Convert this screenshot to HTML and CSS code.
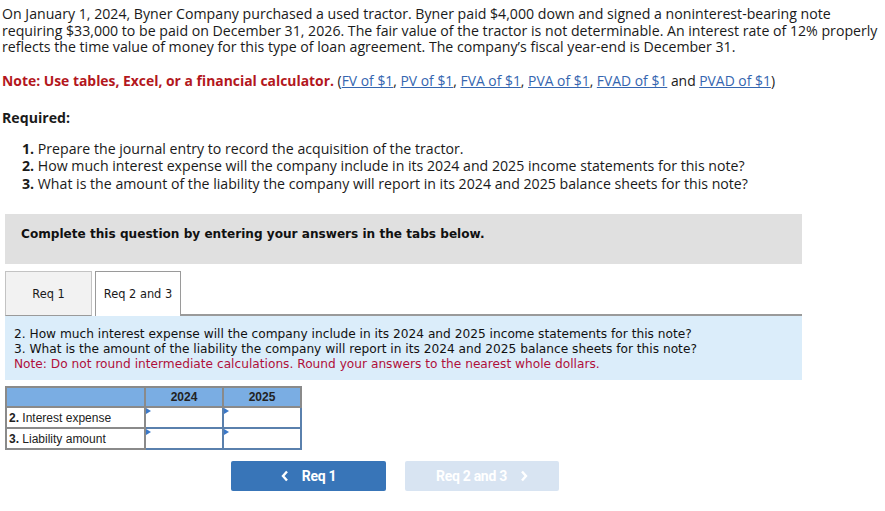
FILE: index.html
```html
<!DOCTYPE html>
<html>
<head>
<meta charset="utf-8">
<link rel="stylesheet" href="styles.css">
</head>
<body>
<div class="page">
  <p class="intro">On January 1, 2024, Byner Company purchased a used tractor. Byner paid $4,000 down and signed a noninterest-bearing note requiring $33,000 to be paid on December 31, 2026. The fair value of the tractor is not determinable. An interest rate of 12% properly reflects the time value of money for this type of loan agreement. The company’s fiscal year-end is December 31.</p>
  <p class="note"><b class="red">Note: Use tables, Excel, or a financial calculator.</b> (<a href="#">FV of $1</a>, <a href="#">PV of $1</a>, <a href="#">FVA of $1</a>, <a href="#">PVA of $1</a>, <a href="#">FVAD of $1</a> and <a href="#">PVAD of $1</a>)</p>
  <p class="req">Required:</p>
  <ol class="reqlist">
    <li><b>1.</b> Prepare the journal entry to record the acquisition of the tractor.</li>
    <li><b>2.</b> How much interest expense will the company include in its 2024 and 2025 income statements for this note?</li>
    <li><b>3.</b> What is the amount of the liability the company will report in its 2024 and 2025 balance sheets for this note?</li>
  </ol>
  <div class="panel">
    <div class="banner">Complete this question by entering your answers in the tabs below.</div>
    <div class="tabs">
      <div class="tab">Req 1</div>
      <div class="tab active">Req 2 and 3</div>
      <div class="tabline"></div>
    </div>
    <div class="question">
      <div>2. How much interest expense will the company include in its 2024 and 2025 income statements for this note?</div>
      <div>3. What is the amount of the liability the company will report in its 2024 and 2025 balance sheets for this note?</div>
      <div class="qnote">Note: Do not round intermediate calculations. Round your answers to the nearest whole dollars.</div>
    </div>
    <table class="grid">
      <tr class="head"><th class="c1"></th><th>2024</th><th>2025</th></tr>
      <tr><td class="c1"><b>2.</b> Interest expense</td><td class="inp"><span class="flag"></span></td><td class="inp"><span class="flag"></span></td></tr>
      <tr><td class="c1"><b>3.</b> Liability amount</td><td class="inp"><span class="flag"></span></td><td class="inp"><span class="flag"></span></td></tr>
    </table>
    <div class="nav">
      <div class="btn prev"><svg class="chev" width="8" height="12" viewBox="0 0 8 12"><polyline points="6,1.5 2,6 6,10.5" fill="none" stroke="#fff" stroke-width="2.4"/></svg>Req 1</div>
      <div class="btn next">Req 2 and 3<svg class="chev right" width="8" height="12" viewBox="0 0 8 12"><polyline points="2,1.5 6,6 2,10.5" fill="none" stroke="#fff" stroke-width="2.4"/></svg></div>
    </div>
  </div>
</div>
</body>
</html>
```
FILE: styles.css
```css
html, body { margin: 0; padding: 0; background: #fff; }
.page { padding: 6px 0 0 2px; font-family: "Open Sans", "Lato", sans-serif; color: #1a1a1a; }
.intro { margin: 0; font-size: 14.15px; line-height: 16.6px; width: 881px; }
.note { margin: 16px 0 0 0; font-size: 13.9px; line-height: 17px; }
.red { color: #b3171d; }
.note a { color: #3566b0; text-decoration: underline; }
.req { margin: 20px 0 0 0; font-size: 14.15px; font-weight: bold; line-height: 17px; }
.reqlist { list-style: none; margin: 14px 0 0 0; padding: 0 0 0 20px; font-size: 14.15px; line-height: 17.5px; }
.panel { margin: 22px 0 0 3px; width: 797px; }
.banner { background: #e0e0e0; height: 50px; box-sizing: border-box; padding: 13px 0 0 16px; font-family: "DejaVu Sans", Verdana, sans-serif; font-weight: bold; font-size: 12.1px; color: #111; }
.tabs { display: flex; align-items: flex-end; margin-top: 7px; height: 45px; }
.tab { width: 87px; height: 45px; box-sizing: border-box; border: 1px solid #c3c3c3; border-bottom: 1px solid #9a9a9a; background: #f2f2f2; font-family: "DejaVu Sans", Verdana, sans-serif; font-size: 11.4px; color: #1a1a1a; display: flex; align-items: center; justify-content: center; margin-right: 3px; }
.tab.active { background: #fff; border: 1px solid #9a9a9a; border-bottom: none; width: 86px; margin-right: 0; }
.tabline { flex: 1; height: 0; border-bottom: 2px solid #9a9a9a; }
.question { background: #dbedfa; padding: 11px 0 8px 9px; font-family: "DejaVu Sans", Verdana, sans-serif; font-size: 12.2px; line-height: 15px; color: #111; }
.qnote { color: #b0103a; }
.grid { margin-top: 6px; border-collapse: collapse; font-family: "Liberation Sans", Arial, sans-serif; font-size: 12px; }
.grid th, .grid td { border: 2px solid #8a8a8a; padding: 0; }
.grid .head th { background: #7aade3; height: 18px; font-weight: bold; color: #222; width: 76px; }
.grid .head th.c1 { width: 137px; }
.grid td { height: 19px; }
.grid td.c1 { padding-left: 2px; color: #222; }
.grid td.inp { border: 2px solid #5a80ad; position: relative; background: #fff; }
.flag { position: absolute; left: 0; top: 0; width: 0; height: 0; border-top: 3px solid transparent; border-bottom: 3px solid transparent; border-left: 5px solid #3a78c8; }
.nav { display: flex; gap: 19px; margin: 11px 0 0 226px; }
.btn { width: 155px; height: 30px; border-radius: 2px; color: #fff; font-family: "Roboto", "Liberation Sans", sans-serif; font-weight: bold; font-size: 14px; display: flex; align-items: center; justify-content: center; letter-spacing: -0.3px; }
.prev { background: #3875b8; }
.next { background: #d8e4f2; width: 154px; }
.chev { margin-right: 13px; }
.chev.right { margin-right: 0; margin-left: 13px; }
```
